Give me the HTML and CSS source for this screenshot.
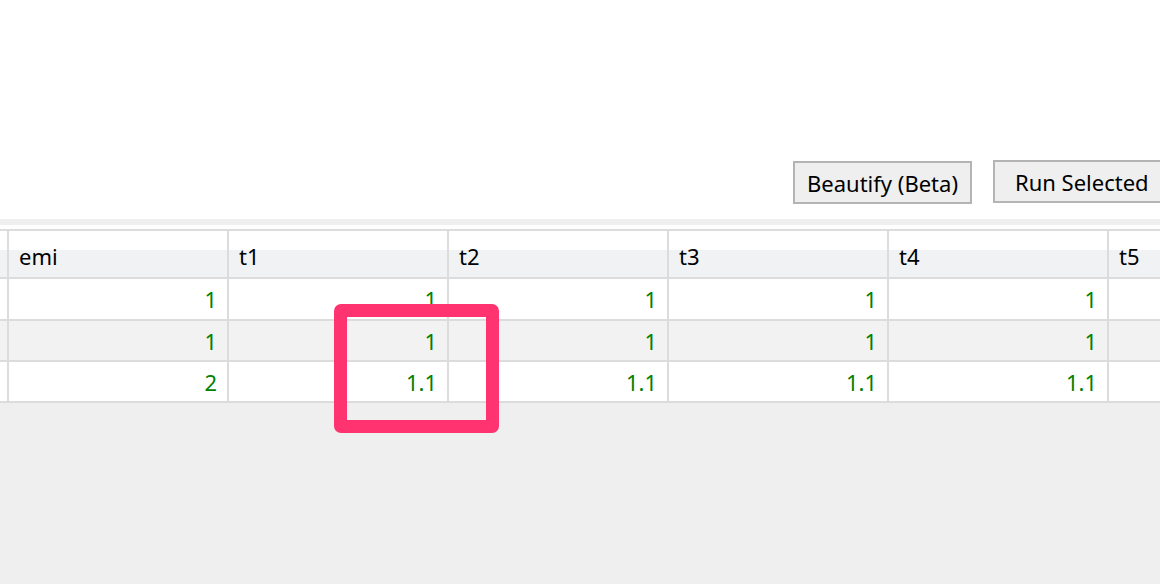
FILE: index.html
```html
<!DOCTYPE html>
<html>
<head>
<meta charset="utf-8">
<link rel="stylesheet" href="styles.css">
</head>
<body>
<div class="page">
  <div class="top">
    <div class="toolbar">
      <button class="btn btn-beautify">Beautify (Beta)</button>
      <button class="btn btn-run">Run Selected</button>
    </div>
  </div>
  <div class="strip"></div>
  <div class="spacer"></div>
  <div class="grid">
    <div class="row head">
      <div class="cell c0"></div>
      <div class="cell">emi</div>
      <div class="cell">t1</div>
      <div class="cell">t2</div>
      <div class="cell">t3</div>
      <div class="cell">t4</div>
      <div class="cell last">t5</div>
    </div>
    <div class="row first">
      <div class="cell c0"></div>
      <div class="cell num">1</div>
      <div class="cell num">1</div>
      <div class="cell num">1</div>
      <div class="cell num">1</div>
      <div class="cell num">1</div>
      <div class="cell num last"></div>
    </div>
    <div class="row alt">
      <div class="cell c0"></div>
      <div class="cell num">1</div>
      <div class="cell num">1</div>
      <div class="cell num">1</div>
      <div class="cell num">1</div>
      <div class="cell num">1</div>
      <div class="cell num last"></div>
    </div>
    <div class="row">
      <div class="cell c0"></div>
      <div class="cell num">2</div>
      <div class="cell num">1.1</div>
      <div class="cell num">1.1</div>
      <div class="cell num">1.1</div>
      <div class="cell num">1.1</div>
      <div class="cell num last"></div>
    </div>
  </div>
  <div class="rest"></div>
  <div class="highlight"></div>
</div>
</body>
</html>
```

FILE: styles.css
```css
html, body {
  margin: 0;
  padding: 0;
}
body {
  width: 1160px;
  height: 584px;
  overflow: hidden;
  background: #efefef;
  font-family: "Noto Sans", "Open Sans", sans-serif;
  font-size: 22px;
  color: #000;
}
.page {
  position: relative;
  width: 1160px;
  height: 584px;
  display: flex;
  flex-direction: column;
  overflow: hidden;
}
.top {
  height: 219px;
  background: #fff;
  overflow: hidden;
}
.toolbar {
  display: flex;
  gap: 21px;
  padding-top: 160px;
  padding-left: 793px;
  align-items: flex-start;
  overflow: hidden;
}
.btn {
  font-family: inherit;
  font-size: 22px;
  color: #000;
  background: #efefef;
  border: 2px solid #b4b4b4;
  border-radius: 0;
  padding: 0;
  margin: 0;
  flex: none;
  display: flex;
  align-items: center;
}
.btn-beautify {
  width: 179px;
  height: 43px;
  margin-top: 1px;
  justify-content: center;
}
.btn-run {
  width: 167px;
  height: 43px;
  padding-left: 20px;
  border-right: none;
  justify-content: flex-start;
  white-space: nowrap;
}
.strip {
  height: 6px;
  background: #efefef;
}
.spacer {
  height: 4px;
  background: #fff;
}
.grid {
  border-top: 2px solid #dcdcdc;
  background: #fff;
}
.row {
  display: flex;
  height: 39px;
  border-bottom: 2px solid #dcdcdc;
}
.row.first {
  height: 40px;
}
.row.head {
  height: 46px;
  background: linear-gradient(to bottom, #ffffff 0, #ffffff 19px, #f1f2f4 19px, #f1f2f4 100%);
}
.row.alt {
  background: #f2f2f2;
}
.cell {
  flex: none;
  border-right: 2px solid #dcdcdc;
  box-sizing: content-box;
  padding: 0 10px;
  width: 198px;
  display: flex;
  align-items: center;
  white-space: nowrap;
  overflow: hidden;
}
.head .cell {
  padding-top: 4px;
}
.cell.c0 {
  width: 7px;
  padding: 0;
}
.cell.last {
  border-right: none;
}
.num {
  justify-content: flex-end;
  color: #008000;
}
.rest {
  flex: 1;
  background: #efefef;
}
.highlight {
  position: absolute;
  left: 334px;
  top: 304px;
  width: 165px;
  height: 129px;
  box-sizing: border-box;
  border: 13px solid #ff3370;
  border-radius: 7px;
}
```
